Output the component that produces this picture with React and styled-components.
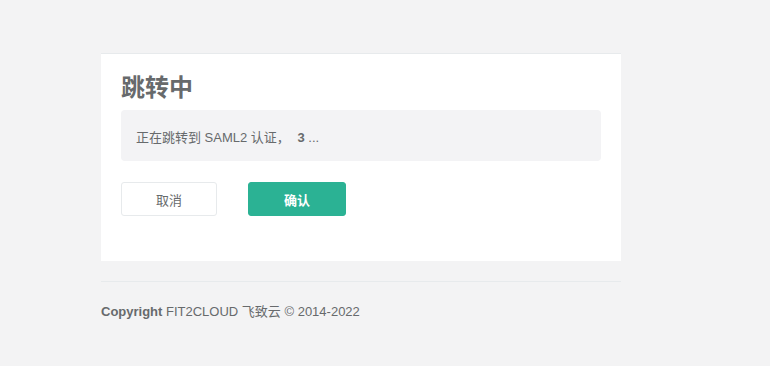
import React from "react";
import styled, { createGlobalStyle } from "styled-components";

const GlobalStyle = createGlobalStyle`
  html, body {
    margin: 0;
    padding: 0;
    background-color: #f3f3f4;
  }
  body {
    font-family: "Liberation Sans", "Noto Sans CJK SC", sans-serif;
    color: #676a6c;
  }
`;

const Page = styled.div`
  width: 520px;
  padding-top: 53px;
  margin-left: 101px;
`;

const Card = styled.div`
  background-color: #ffffff;
  border-top: 1px solid #e7eaec;
  padding: 21px 20px 45px;
`;

const Title = styled.h2`
  margin: 0 0 9px;
  font-size: 24px;
  line-height: 26px;
  font-weight: 700;
  color: #676a6c;
`;

const Message = styled.div`
  background-color: #f3f3f5;
  border-radius: 4px;
  padding: 19px 15px 15px;
  font-size: 13px;
  line-height: 17px;
  color: #676a6c;

  b {
    margin-left: 4px;
    font-weight: 700;
  }
`;

const Actions = styled.div`
  display: flex;
  gap: 31px;
  margin-top: 21px;
`;

const Button = styled.button`
  width: ${(p) => (p.$primary ? "98px" : "96px")};
  height: 34px;
  border-radius: 3px;
  font-family: inherit;
  font-size: 13px;
  font-weight: ${(p) => (p.$primary ? 700 : 400)};
  cursor: pointer;
  border: 1px solid ${(p) => (p.$primary ? "#2bb294" : "#e7eaec")};
  background-color: ${(p) => (p.$primary ? "#2bb294" : "#ffffff")};
  color: ${(p) => (p.$primary ? "#ffffff" : "#676a6c")};
`;

const Footer = styled.div`
  margin-top: 20px;
  border-top: 1px solid #e7eaec;
  padding-top: 21px;
  font-size: 13px;
  line-height: 17px;
  color: #676a6c;

  strong {
    font-weight: 700;
  }
`;

export default function App() {
  return (
    <>
      <GlobalStyle />
      <Page>
        <Card>
          <Title>跳转中</Title>
          <Message>
            正在跳转到 SAML2 认证， <b>3</b> ...
          </Message>
          <Actions>
            <Button>取消</Button>
            <Button $primary>确认</Button>
          </Actions>
        </Card>
        <Footer>
          <strong>Copyright</strong> FIT2CLOUD 飞致云 © 2014-2022
        </Footer>
      </Page>
    </>
  );
}
